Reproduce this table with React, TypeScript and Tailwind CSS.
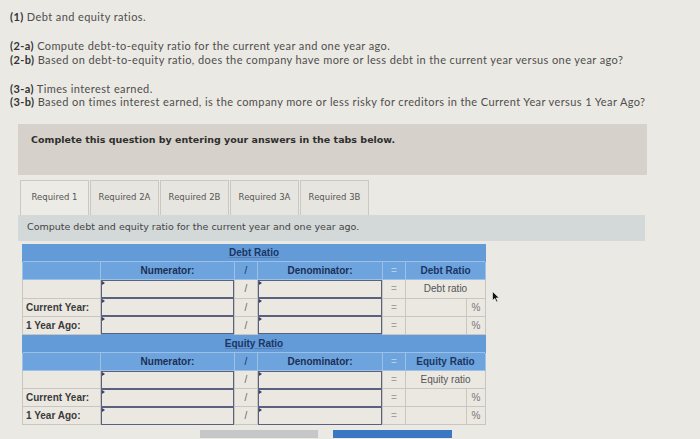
import React from 'react';

const tabs = ['Required 1', 'Required 2A', 'Required 2B', 'Required 3A', 'Required 3B'];

const Marker = () => (
  <span className="absolute left-0 top-0 w-0 h-0 border-t-[2px] border-b-[2px] border-l-[3px] border-t-transparent border-b-transparent border-l-[#3b4060]" />
);

const InputCell = () => (
  <td className="p-0 h-[18px] border-0">
    <div className="relative h-[18px] border border-[#5a6180] bg-[#ebe8e2]">
      <Marker />
    </div>
  </td>
);

interface SectionProps {
  title: string;
  ratioLabel: string;
  ratioHint: string;
}

const Section: React.FC<SectionProps> = ({ title, ratioLabel, ratioHint }) => {
  const rows = ['', 'Current Year:', '1 Year Ago:'];
  return (
    <>
      <tr className="h-[18px] bg-[#629bd8]">
        <td colSpan={7} className="text-center text-[10px] font-bold text-[#1c3563] underline decoration-[#5a7fb0] border-x border-[#629bd8]">
          {title}
        </td>
      </tr>
      <tr className="h-[18px] bg-[#6ea4dd] text-[10px] font-bold text-[#1c2e55]">
        <td className="border border-[#9cc0e6]"></td>
        <td className="border border-[#9cc0e6] text-center">Numerator:</td>
        <td className="border border-[#9cc0e6] text-center font-normal">/</td>
        <td className="border border-[#9cc0e6] text-center">Denominator:</td>
        <td className="border border-[#9cc0e6] text-center font-normal text-[#b5cfea]">=</td>
        <td colSpan={2} className="border border-[#9cc0e6] text-center text-[#1c3563]">{ratioLabel}</td>
      </tr>
      {rows.map((label, i) => (
        <tr key={i} className="h-[18px] text-[10px]">
          <td className="border border-[#c9c6c0] pl-[3px] font-bold text-[#3a3a3a]">{label}</td>
          <InputCell />
          <td className="border border-[#c9c6c0] text-center text-[#666]">/</td>
          <InputCell />
          <td className="border border-[#c9c6c0] text-center text-[#a0a0a0]">=</td>
          {i === 0 ? (
            <td colSpan={2} className="border border-[#c9c6c0] text-center text-[#555]">{ratioHint}</td>
          ) : (
            <>
              <td className="border border-[#c9c6c0]"></td>
              <td className="border border-[#c9c6c0] text-center text-[#777]">%</td>
            </>
          )}
        </tr>
      ))}
    </>
  );
};

export default function App() {
  return (
    <div className="relative w-[700px] h-[439px] overflow-hidden bg-[#ebe9e3] font-['Lato',sans-serif]">
      <div className="pt-[10px] pl-[10px] text-[11px] leading-[13.5px] tracking-[0.4px] text-[#4e4e4e]">
        <p><b className="text-[#333]">(1)</b> Debt and equity ratios.</p>
        <p className="mt-[15.5px]"><b className="text-[#333]">(2-a)</b> Compute debt-to-equity ratio for the current year and one year ago.</p>
        <p><b className="text-[#333]">(2-b)</b> Based on debt-to-equity ratio, does the company have more or less debt in the current year versus one year ago?</p>
        <p className="mt-[15.5px]"><b className="text-[#333]">(3-a)</b> Times interest earned.</p>
        <p><b className="text-[#333]">(3-b)</b> Based on times interest earned, is the company more or less risky for creditors in the Current Year versus 1 Year Ago?</p>
      </div>

      <div className="ml-[18px] mt-[15px] w-[629px] h-[51px] bg-[#d6d2cb] pl-[13px] pt-[10px] font-['DejaVu_Sans',sans-serif] text-[9.5px] font-bold leading-[12px] text-[#2e2e2e]">
        Complete this question by entering your answers in the tabs below.
      </div>

      <div className="ml-[20px] mt-[5px] flex gap-[1px] font-['DejaVu_Sans',sans-serif]">
        {tabs.map((t, i) => (
          <div
            key={t}
            className={`h-[35px] w-[69px] flex items-center justify-center border border-b-0 border-[#cbc8c2] text-[8.5px] text-[#555] ${i === 0 ? 'bg-[#ecebe6]' : 'bg-[#e7e5df]'}`}
          >
            {t}
          </div>
        ))}
      </div>

      <div className="ml-[18px] w-[627px] h-[26px] bg-[#d3d8d8] pl-[9px] flex items-center font-['DejaVu_Sans',sans-serif] text-[9.5px] text-[#444]">
        Compute debt and equity ratio for the current year and one year ago.
      </div>

      <table className="ml-[22px] mt-[3px] w-[463px] table-fixed border-collapse font-['Liberation_Sans',sans-serif] bg-[#ebe8e2]">
        <colgroup>
          <col className="w-[78px]" />
          <col className="w-[134px]" />
          <col className="w-[23px]" />
          <col className="w-[125px]" />
          <col className="w-[23px]" />
          <col className="w-[61px]" />
          <col className="w-[19px]" />
        </colgroup>
        <tbody>
          <Section title="Debt Ratio" ratioLabel="Debt Ratio" ratioHint="Debt ratio" />
          <Section title="Equity Ratio" ratioLabel="Equity Ratio" ratioHint="Equity ratio" />
        </tbody>
      </table>

      <div className="mt-[5px] flex">
        <div className="ml-[200px] w-[118px] h-[8px] bg-[#c5c7c9]" />
        <div className="ml-[15px] w-[119px] h-[8px] bg-[#3a78c4]" />
      </div>

      <svg className="absolute left-[492px] top-[291px]" width="8" height="12" viewBox="0 0 8 12">
        <path d="M0.5 0.5 L0.5 9.5 L2.8 7.4 L4.5 11 L5.8 10.4 L4.2 6.9 L7.2 6.9 Z" fill="#111" stroke="#fff" strokeWidth="0.6" />
      </svg>
    </div>
  );
}
